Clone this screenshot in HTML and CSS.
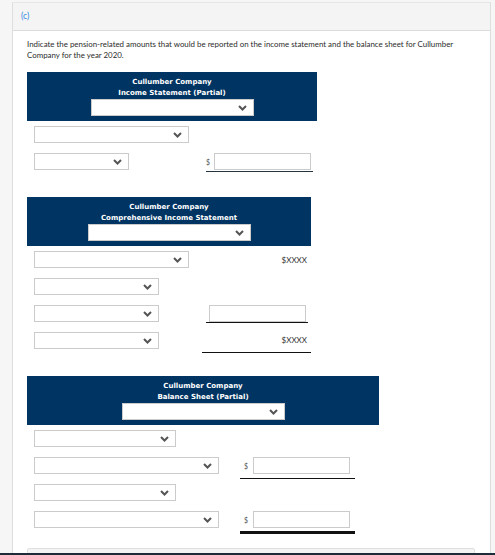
FILE: index.html
```html
<!DOCTYPE html>
<html lang="en">

<head>
    <meta charset="UTF-8">
    <meta name="viewport" content="width=device-width, initial-scale=1.0">
    <title>Pension Statements</title>
    <link rel="stylesheet" href="styles.css">
</head>

<body>

    <div class="panel">
        <div class="panel-head">(c)</div>

        <div class="panel-body">
            <p class="prompt">Indicate the pension-related amounts that would be reported on the income statement and the balance sheet for Cullumber Company for the year 2020.</p>

            <!-- income statement -->
            <div class="stmt stmt-income">
                <div class="stmt-head">
                    <div>Cullumber Company</div>
                    <div>Income Statement (Partial)</div>
                    <div class="pick pick-head"><select></select><svg viewBox="0 0 9 6"><path d="M1 1l3.5 3.5 3.5-3.5"/></svg></div>
                </div>
                <div class="row">
                    <div class="label"><div class="pick w155"><select></select><svg viewBox="0 0 9 6"><path d="M1 1l3.5 3.5 3.5-3.5"/></svg></div></div>
                </div>
                <div class="row">
                    <div class="label"><div class="pick w95"><select></select><svg viewBox="0 0 9 6"><path d="M1 1l3.5 3.5 3.5-3.5"/></svg></div></div>
                    <div class="amt amt-dark"><span class="cur">$</span><input type="text"></div>
                </div>
            </div>

            <!-- comprehensive income -->
            <div class="stmt stmt-comp">
                <div class="stmt-head">
                    <div>Cullumber Company</div>
                    <div>Comprehensive Income Statement</div>
                    <div class="pick pick-head"><select></select><svg viewBox="0 0 9 6"><path d="M1 1l3.5 3.5 3.5-3.5"/></svg></div>
                </div>
                <div class="row">
                    <div class="label"><div class="pick w155"><select></select><svg viewBox="0 0 9 6"><path d="M1 1l3.5 3.5 3.5-3.5"/></svg></div></div>
                    <div class="amt amt-text">$XXXX</div>
                </div>
                <div class="row">
                    <div class="label"><div class="pick w125"><select></select><svg viewBox="0 0 9 6"><path d="M1 1l3.5 3.5 3.5-3.5"/></svg></div></div>
                </div>
                <div class="row">
                    <div class="label"><div class="pick w125"><select></select><svg viewBox="0 0 9 6"><path d="M1 1l3.5 3.5 3.5-3.5"/></svg></div></div>
                    <div class="amt amt-sub"><input type="text"></div>
                </div>
                <div class="row">
                    <div class="label"><div class="pick w125"><select></select><svg viewBox="0 0 9 6"><path d="M1 1l3.5 3.5 3.5-3.5"/></svg></div></div>
                    <div class="amt amt-text amt-line">$XXXX</div>
                </div>
            </div>

            <!-- balance sheet -->
            <div class="stmt stmt-balance">
                <div class="stmt-head">
                    <div>Cullumber Company</div>
                    <div>Balance Sheet (Partial)</div>
                    <div class="pick pick-head"><select></select><svg viewBox="0 0 9 6"><path d="M1 1l3.5 3.5 3.5-3.5"/></svg></div>
                </div>
                <div class="row">
                    <div class="label"><div class="pick w142"><select></select><svg viewBox="0 0 9 6"><path d="M1 1l3.5 3.5 3.5-3.5"/></svg></div></div>
                </div>
                <div class="row">
                    <div class="label"><div class="pick w185"><select></select><svg viewBox="0 0 9 6"><path d="M1 1l3.5 3.5 3.5-3.5"/></svg></div></div>
                    <div class="amt amt-total"><span class="cur">$</span><input type="text"></div>
                </div>
                <div class="row">
                    <div class="label"><div class="pick w142"><select></select><svg viewBox="0 0 9 6"><path d="M1 1l3.5 3.5 3.5-3.5"/></svg></div></div>
                </div>
                <div class="row">
                    <div class="label"><div class="pick w185"><select></select><svg viewBox="0 0 9 6"><path d="M1 1l3.5 3.5 3.5-3.5"/></svg></div></div>
                    <div class="amt amt-total amt-double"><span class="cur">$</span><input type="text"></div>
                </div>
            </div>

            <div class="next-part"></div>
        </div>
    </div>

    <div class="bottom-bar"></div>

</body>

</html>
```

FILE: styles.css
```css
body {
    margin: 0;
    background: #f6f6f6;
    font-family: Lato, "Liberation Sans", sans-serif;
    color: #333;
}

.panel {
    margin: 2px 0 0 12px;
    width: 477px;
    background: #fff;
    border: 1px solid #dedede;
    border-top-color: #e6e6e6;
}

.panel-head {
    height: 27px;
    padding: 0 8px;
    background: #f4f4f4;
    border-bottom: 1px solid #dcdcdc;
    color: #2f86dd;
    font-size: 8.5px;
    line-height: 26px;
}

.panel-body {
    padding: 8px 15px 0 14px;
}

.prompt {
    margin: 0 0 12px;
    font-size: 7.9px;
    line-height: 10.5px;
    color: #2b2b2b;
}

.stmt + .stmt {
    margin-top: 22px;
}

.stmt-income {
    width: 290px;
}

.stmt-comp {
    width: 284px;
}

.stmt-balance {
    width: 352px;
}

.stmt-head {
    display: flex;
    flex-direction: column;
    align-items: center;
    padding: 5px 0 5px;
    background: #003462;
    color: #fff;
    font-family: "DejaVu Sans", Verdana, sans-serif;
    font-weight: bold;
    font-size: 7px;
    line-height: 10.5px;
}

/* select with a chevron laid over it in the same grid cell */
.pick {
    display: grid;
    height: 17px;
}

.pick select,
.pick svg {
    grid-area: 1 / 1;
}

.pick select {
    appearance: none;
    width: 100%;
    height: 17px;
    margin: 0;
    border: 1px solid #cbcbcb;
    border-radius: 0;
    background: #fff;
}

.pick svg {
    justify-self: end;
    align-self: center;
    width: 9px;
    height: 6px;
    margin-right: 7px;
    fill: none;
    stroke: #555;
    stroke-width: 2;
    pointer-events: none;
}

.pick-head {
    width: 163px;
    margin-top: 1px;
}

.w95 { width: 95px; }
.w125 { width: 125px; }
.w142 { width: 142px; }
.w155 { width: 155px; }
.w185 { width: 185px; }

.row {
    display: flex;
    align-items: flex-start;
    height: 27px;
    padding-left: 7px;
}

.label {
    margin-top: 5px;
}

.stmt-income .label { width: 172px; }
.stmt-comp .label { width: 168px; }
.stmt-balance .label { width: 206px; }

.amt {
    display: flex;
    align-items: center;
    margin-top: 5px;
}

.amt input {
    width: 97px;
    height: 17px;
    margin: 0;
    padding: 0;
    border: 1px solid #cbcbcb;
    box-sizing: border-box;
}

.cur {
    font-size: 7px;
    color: #555;
}

.amt-dark {
    width: 107px;
    gap: 4px;
    padding-bottom: 1px;
    border-bottom: 1px solid #25343f;
}

.amt-text {
    width: 109px;
    justify-content: flex-end;
    box-sizing: border-box;
    padding-right: 4px;
    height: 17px;
    font-size: 8px;
}

.amt-line {
    height: 21px;
    padding-bottom: 4px;
    border-bottom: 1px solid #111;
}

.amt-sub {
    width: 102px;
    margin-left: 4px;
    padding-left: 3px;
    box-sizing: border-box;
    border-bottom: 1px solid #111;
}

.amt-total {
    width: 115px;
    gap: 5px;
    box-sizing: border-box;
    padding: 0 0 4px 4px;
    border-bottom: 1px solid #111;
}

.amt-double {
    padding-bottom: 3px;
    border-bottom: 3px solid #111;
}

.next-part {
    height: 40px;
    margin-top: 15px;
    background: #f4f4f4;
    border: 1px solid #e0e0e0;
    border-radius: 2px;
}

.bottom-bar {
    position: fixed;
    left: 0;
    right: 0;
    bottom: 0;
    height: 2px;
    background: #1d2c3a;
}
```
